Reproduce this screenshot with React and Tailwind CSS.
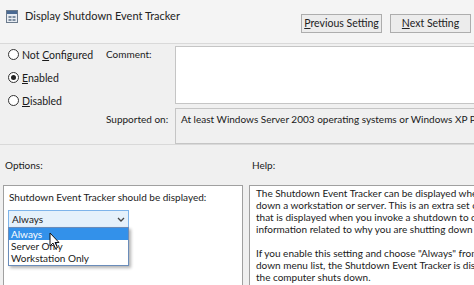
import React from 'react'

const font = { fontFamily: 'Lato, "Noto Sans", sans-serif' }

const Radio = ({ checked, label, accessKey }) => {
  const i = label.indexOf(accessKey)
  return (
    <div className="flex items-center gap-[3px] h-[23px] whitespace-nowrap">
      <span className="w-[11px] h-[11px] rounded-full border border-[#333] bg-white flex items-center justify-center">
        {checked && <span className="w-[5px] h-[5px] rounded-full bg-[#222]" />}
      </span>
      <span className="text-[10.5px]">
        {label.slice(0, i)}
        <span className="underline">{label[i]}</span>
        {label.slice(i + 1)}
      </span>
    </div>
  )
}

const WinButton = ({ children }) => (
  <button className="h-[19px] w-[81px] border border-[#adadad] bg-[#ececec] text-[10.5px] text-[#222] leading-none whitespace-nowrap">
    {children}
  </button>
)

const helpLines = [
  'The Shutdown Event Tracker can be displayed when you shut',
  'down a workstation or server.  This is an extra set of questions',
  'that is displayed when you invoke a shutdown to collect',
  'information related to why you are shutting down the computer.',
  '',
  'If you enable this setting and choose "Always" from the drop-',
  'down menu list, the Shutdown Event Tracker is displayed when',
  'the computer shuts down.',
]

const App = () => {
  return (
    <div className="w-[474px] h-[285px] overflow-hidden bg-[#f0f0f0] text-[10px] text-[#1a1a1a] leading-[12px]" style={font}>
      {/* header */}
      <div className="h-[44px] flex justify-between border-b border-[#d9d9d9] bg-[#f4f4f4]">
        <div className="flex items-start pt-[10px] pl-[6px] gap-[7px]">
          <svg width="12" height="13" viewBox="0 0 12 13">
            <rect x="0.5" y="0.5" width="11" height="12" fill="#e8ecf2" stroke="#6b7a8c" />
            <rect x="1" y="1" width="10" height="3" fill="#4a6a93" />
            <rect x="2.5" y="6" width="3" height="2" fill="#7d8da0" />
            <rect x="6.5" y="6" width="3" height="2" fill="#7d8da0" />
            <rect x="2.5" y="9" width="3" height="2" fill="#7d8da0" />
            <rect x="6.5" y="9" width="3" height="2" fill="#7d8da0" />
          </svg>
          <span className="text-[11px] text-[#222] whitespace-nowrap">Display Shutdown Event Tracker</span>
        </div>
        <div className="flex items-start gap-[8px] pt-[14px] pr-[3px]">
          <WinButton><span className="underline">P</span>revious Setting</WinButton>
          <WinButton><span className="underline">N</span>ext Setting</WinButton>
        </div>
      </div>

      {/* settings */}
      <div className="h-[101px] grid grid-cols-[106px_69px_1fr] border-b border-[#d9d9d9]">
        <div className="pl-[8px] flex flex-col">
          <div className="-mt-[1px]">
            <Radio label="Not Configured" accessKey="C" />
            <Radio label="Enabled" accessKey="E" checked />
            <Radio label="Disabled" accessKey="D" />
          </div>
        </div>
        <div className="flex flex-col pt-[4px] whitespace-nowrap">
          <div className="h-[61px]">Comment:</div>
          <div className="pt-[4px]">Supported on:</div>
        </div>
        <div className="flex flex-col pt-[2px]">
          <div className="h-[58px] bg-white border border-[#c5c5c5] border-r-0" />
          <div className="mt-[4px] flex-1 border border-[#c5c5c5] border-r-0 pl-[5px] pt-[4px] whitespace-nowrap overflow-hidden">
            At least Windows Server 2003 operating systems or Windows XP Professional
          </div>
        </div>
      </div>

      {/* labels */}
      <div className="h-[40px] grid grid-cols-[247px_1fr] items-center">
        <div className="pl-[5px]">Options:</div>
        <div className="pl-[5px]">Help:</div>
      </div>

      {/* panels */}
      <div className="grid grid-cols-[240px_1fr] gap-[6px] pl-[3px] h-[100px]">
        <div className="border border-[#a0a0a0] border-b-0 bg-white relative">
          <div className="pl-[5px] pt-[5px] whitespace-nowrap">Shutdown Event Tracker should be displayed:</div>
          <div className="ml-[4px] mt-[7px] w-[121px] h-[18px] border border-[#7eb4ea] bg-[#e5f1fb] flex items-center justify-between px-[3px]">
            <span>Always</span>
            <svg width="8" height="5" viewBox="0 0 8 5">
              <path d="M1 1 L4 4 L7 1" fill="none" stroke="#444" strokeWidth="1.3" />
            </svg>
          </div>
          <div className="absolute left-[4px] top-[41px] w-[121px] border border-[#6a8cba] bg-white shadow-[2px_2px_3px_rgba(0,0,0,0.3)]">
            <div className="h-[12px] bg-[#3391ea] text-white pl-[2px]">Always</div>
            <div className="h-[12px] pl-[2px]">Server Only</div>
            <div className="h-[13px] pl-[2px]">Workstation Only</div>
          </div>
          <svg className="absolute left-[45px] top-[46px]" width="12" height="18" viewBox="0 0 12 18">
            <path d="M1 1 L1 14 L4 11 L6.5 16.5 L8.5 15.5 L6 10.5 L10 10.5 Z" fill="white" stroke="#111" strokeWidth="1" strokeLinejoin="round" />
          </svg>
        </div>
        <div className="border border-[#a0a0a0] border-r-0 border-b-0 bg-white pl-[6px] pt-[1px] overflow-hidden">
          {helpLines.map((l, i) => (
            <div key={i} className="h-[12px] whitespace-nowrap">{l}</div>
          ))}
        </div>
      </div>
    </div>
  )
}

export default App
